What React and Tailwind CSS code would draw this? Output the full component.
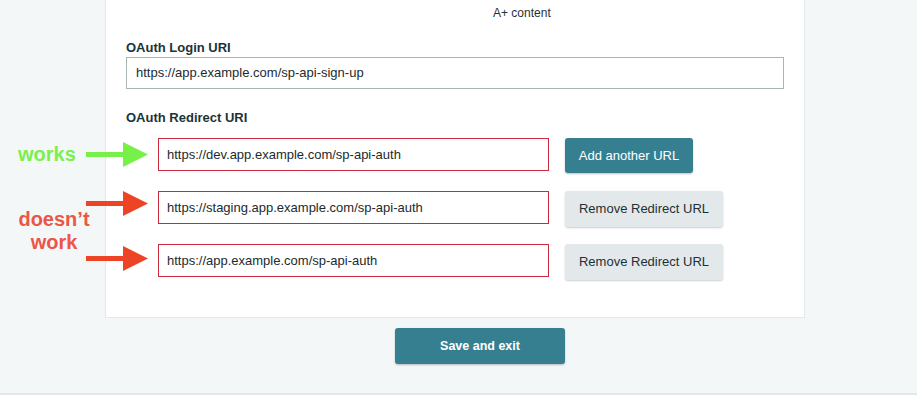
import React from "react";

function Arrow({ color, className }) {
  return (
    <svg className={className} width="62" height="25" viewBox="0 0 62 25">
      <rect x="0" y="10" width="40" height="5" fill={color} />
      <polygon points="37,0 62,12.5 37,25" fill={color} />
    </svg>
  );
}

export default function App() {
  const rows = [
    { url: "https://dev.app.example.com/sp-api-auth", add: true },
    { url: "https://staging.app.example.com/sp-api-auth" },
    { url: "https://app.example.com/sp-api-auth" },
  ];
  return (
    <div
      className="relative w-[917px] h-[395px] bg-[#f3f7f8] overflow-hidden flex flex-col"
      style={{ fontFamily: '"Liberation Sans", Arial, sans-serif' }}
    >
      <div className="ml-[105px] w-[700px] h-[318px] shrink-0 bg-white border-x border-b border-[#e2e9eb] px-[20px] overflow-hidden">
        <div className="-mt-[16px] grid grid-cols-[367px_1fr] text-[12px] leading-[18px] text-[#1f3237]">
          <div className="pl-[1px] whitespace-nowrap">Choose the roles that your application may request</div>
          <div className="whitespace-nowrap">
            <div>Manage your product listings, images, and listing</div>
            <div className="mt-[2px]">A+ content</div>
          </div>
        </div>

        <div className="mt-[18px] text-[13px] leading-[16px] font-bold text-[#1c3338]">OAuth Login URI</div>
        <div className="mt-[1px] h-[32px] border border-[#a9b4b7] flex items-center px-[9px] text-[13px] text-[#1c2a2e]">
          https://app.example.com/sp-api-sign-up
        </div>

        <div className="mt-[21px] text-[13px] leading-[16px] font-bold text-[#1c3338]">OAuth Redirect URI</div>
        <div className="mt-[12px] ml-[32px] flex flex-col gap-[20px]">
          {rows.map((r, i) => (
            <div key={i} className="flex items-start h-[33px]">
              <div className="w-[391px] h-[33px] shrink-0 border border-[#c92a3e] flex items-center px-[8px] text-[13px] text-[#1c2a2e]">
                {r.url}
              </div>
              {r.add ? (
                <button className="ml-[16px] w-[128px] h-[35px] shrink-0 rounded-[3px] bg-[#367f91] text-white text-[13px] shadow-[0_1px_2px_rgba(0,0,0,0.25)]">
                  Add another URL
                </button>
              ) : (
                <button className="ml-[16px] w-[158px] h-[36px] shrink-0 rounded-[3px] bg-[#e3e9eb] text-[#1f3035] text-[13px] shadow-[0_1px_2px_rgba(0,0,0,0.2)]">
                  Remove Redirect URL
                </button>
              )}
            </div>
          ))}
        </div>
      </div>

      <button className="mt-[10px] ml-[395px] w-[170px] h-[36px] rounded-[3px] bg-[#367f91] text-white text-[12.5px] font-bold shadow-[0_1px_2px_rgba(0,0,0,0.25)]">
        Save and exit
      </button>

      <div className="mt-auto h-[2px] bg-[#e4e7e8]" />

      <div className="absolute left-[18px] top-[142px] text-[20px] leading-[24px] font-bold text-[#7af04c]">works</div>
      <div className="absolute left-[18px] top-[208px] w-[72px] text-center text-[20px] leading-[23px] font-bold text-[#ec5646]">
        doesn’t
        <br />
        work
      </div>
      <Arrow color="#78f04a" className="absolute left-[86px] top-[142px]" />
      <Arrow color="#ec4425" className="absolute left-[86px] top-[191px]" />
      <Arrow color="#ec4425" className="absolute left-[86px] top-[246px]" />
    </div>
  );
}
